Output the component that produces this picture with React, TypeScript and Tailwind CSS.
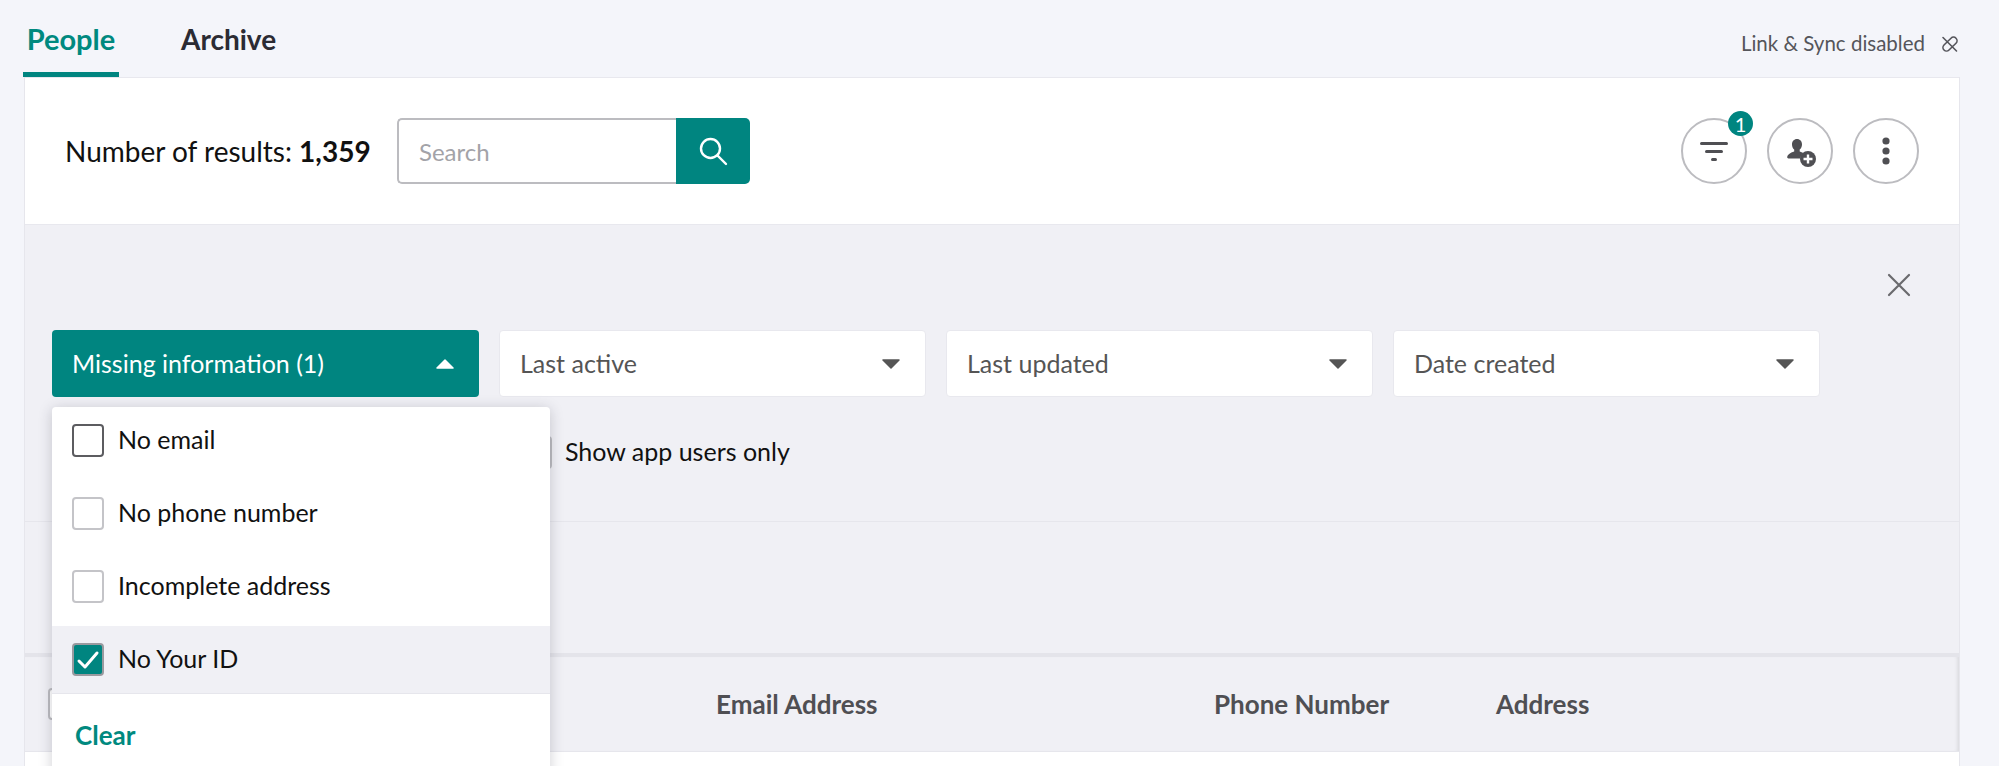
const teal = 'bg-[#008580]';

function Caret({ up, white }: { up?: boolean; white?: boolean }) {
  return (
    <svg width="20" height="10" viewBox="0 0 20 10" className={up ? 'rotate-180' : ''}>
      <path d="M2 1h16l-8 8z" fill={white ? '#fff' : '#555'} stroke={white ? '#fff' : '#555'} strokeWidth="1.5" strokeLinejoin="round" />
    </svg>
  );
}

function FilterDropdown({ label, active }: { label: string; active?: boolean }) {
  return (
    <div
      className={`w-[427px] h-[67px] rounded-[4px] flex items-center justify-between pl-[20px] pr-[24px] ${
        active ? `${teal} text-white` : 'bg-white border border-[#e8e8ee] text-[#555]'
      }`}
    >
      <span>{label}</span>
      <Caret up={active} white={active} />
    </div>
  );
}

function CheckRow({ label, checked, dark }: { label: string; checked?: boolean; dark?: boolean }) {
  return (
    <div className={`h-[67px] flex items-center gap-[14px] pl-[20px] ${checked ? 'bg-[#f0f0f5]' : ''}`}>
      {checked ? (
        <span className={`w-[32px] h-[33px] rounded-[4px] ${teal} border-2 border-[#9a9a9f] flex items-center justify-center`}>
          <svg width="24" height="20" viewBox="0 0 24 20" fill="none" stroke="#fff" strokeWidth="3" strokeLinecap="round" strokeLinejoin="round">
            <path d="M3 11l6 6L21 3" />
          </svg>
        </span>
      ) : (
        <span className={`w-[32px] h-[33px] rounded-[4px] bg-white border-2 ${dark ? 'border-[#5c5c60]' : 'border-[#c4c4c8]'}`} />
      )}
      <span className="text-[#111] -mt-[2px]">{label}</span>
    </div>
  );
}

function RoundButton({ children }: { children: React.ReactNode }) {
  return (
    <div className="relative w-[66px] h-[66px] rounded-full border-2 border-[#bcbcc0] bg-white flex items-center justify-center">
      {children}
    </div>
  );
}

export default function App() {
  return (
    <div
      className="relative w-[1999px] h-[766px] overflow-hidden bg-[#f4f5fa] text-[25px] leading-none pl-[24px]"
      style={{ fontFamily: 'Lato, "Noto Sans", sans-serif' }}
    >
      {/* tabs row */}
      <div className="h-[77px] w-[1936px] flex items-end justify-between">
        <div className="flex gap-[62px] -ml-[1px] font-bold">
          <div className="h-[77px] w-[96px] flex flex-col items-center justify-end text-[#00897f] text-[29px]">
            <span className="mb-[19px]">People</span>
            <span className={`h-[5px] w-full ${teal}`} />
          </div>
          <div className="h-[77px] flex flex-col justify-end text-[#2b2b33] text-[28px]">
            <span className="mb-[24px]">Archive</span>
          </div>
        </div>
        <div className="h-[77px] flex items-center gap-[16px] pt-[10px] text-[20.500px] text-[#55555b]">
          <span>Link &amp; Sync disabled</span>
          <svg width="18" height="18" viewBox="0 0 18 18" fill="none" stroke="#55555b" strokeWidth="1.6" strokeLinecap="round" strokeLinejoin="round" className="mr-[1px]">
            <path d="M2 2.500l13.500 13.500M10 3.200a3.400 3.400 0 015 5L8 15a3.400 3.400 0 01-5-5z" />
          </svg>
        </div>
      </div>

      <div className="w-[1936px] border-r border-l border-[#e6e6ec]">
        {/* results bar */}
        <div className="h-[148px] bg-white border-t border-b border-[#e8e8ee] flex items-center justify-between pl-[40px] pr-[40px]">
          <div className="flex items-center">
            <span className="w-[332px] text-[28px] text-[#111]">
              Number of results: <b>1,359</b>
            </span>
            <input
              placeholder="Search"
              className="w-[279px] h-[66px] pl-[20px] text-[24px] bg-white border-2 border-r-0 border-[#bcbcc0] rounded-l-[5px] outline-none placeholder:text-[#a3a3a8]"
            />
            <div className={`w-[74px] h-[66px] rounded-r-[5px] ${teal} flex items-center justify-center`}>
              <svg width="30" height="30" viewBox="0 0 30 30" fill="none" stroke="#fff" strokeWidth="2.400" strokeLinecap="round">
                <circle cx="12.500" cy="12.500" r="9.500" />
                <path d="M19.500 19.500L28 28" />
              </svg>
            </div>
          </div>
          <div className="flex gap-[20px]">
            <RoundButton>
              <svg width="30" height="22" viewBox="0 0 30 22" fill="#4f4f53">
                <rect x="1" y="2" width="28" height="3" rx="1.500" />
                <rect x="6" y="10" width="18" height="3" rx="1.500" />
                <rect x="12" y="18" width="6" height="3" rx="1.500" />
              </svg>
              <span className="absolute -top-[9px] left-[45px] w-[25px] h-[25px] rounded-full bg-[#008580] text-white text-[20px] flex items-center justify-center">
                1
              </span>
            </RoundButton>
            <RoundButton>
              <svg width="30" height="30" viewBox="0 0 30 30" className="ml-[4px] mt-[4px]">
                <path
                  fill="#4f4f53"
                  d="M10 1c3 0 5 2.400 5 5.400 0 2.200-1 4-2.300 5.200v1.800c1.400.5 2.600 1 3.500 1.500a9 9 0 00-2.700 5.600H1.500c-.8 0-1.300-.5-1.300-1.200 0-2.600 3-4.800 7-5.900v-1.800C5.900 10.400 5 8.600 5 6.400 5 3.400 7 1 10 1z"
                />
                <circle cx="21" cy="21" r="8" fill="#4f4f53" />
                <path d="M21 16.500v9M16.500 21h9" stroke="#fff" strokeWidth="2.400" />
              </svg>
            </RoundButton>
            <RoundButton>
              <svg width="10" height="30" viewBox="0 0 10 30" fill="#4f4f53">
                <circle cx="5" cy="5" r="3.600" />
                <circle cx="5" cy="15" r="3.600" />
                <circle cx="5" cy="25" r="3.600" />
              </svg>
            </RoundButton>
          </div>
        </div>

        {/* filter panel */}
        <div className="bg-[#f0f0f5]">
          <div className="h-[105px] pt-[48px] pr-[48px] flex justify-end">
            <svg width="24" height="24" viewBox="0 0 24 24" stroke="#6a6a6e" strokeWidth="2.200" strokeLinecap="round">
              <path d="M2 2l20 20M22 2L2 22" />
            </svg>
          </div>
          <div className="flex gap-[20px] pl-[27px]">
            <FilterDropdown label="Missing information (1)" active />
            <FilterDropdown label="Last active" />
            <FilterDropdown label="Last updated" />
            <FilterDropdown label="Date created" />
          </div>
          <div className="h-[125px] pt-[39px] pl-[495px] flex items-start gap-[13px] border-b border-[#e6e6ec] text-[#111]">
            <span className="w-[32px] h-[33px] rounded-[4px] bg-white border-2 border-[#bcbcc0]" />
            <span className="mt-[3px]">Show app users only</span>
          </div>
          <div className="h-[131px]" />
          <div className="h-[4px] bg-[#e4e4ea]" />
          <div className="h-[95px] flex items-center pl-[23px] font-bold text-[26px] text-[#4f4f53] border-b border-[#e6e6ec] shadow-[inset_-4px_0_4px_-3px_rgba(0,0,0,0.12)]">
            <span className="w-[32px] h-[32px] mr-[636px] rounded-[4px] bg-white border-2 border-[#bcbcc0]" />
            <span className="w-[498px]">Email Address</span>
            <span className="w-[282px]">Phone Number</span>
            <span>Address</span>
          </div>
          <div className="h-[14px] bg-white" />
        </div>
      </div>

      {/* open dropdown menu */}
      <div className="absolute left-[52px] top-[407px] w-[498px] h-[400px] bg-white rounded-[4px] shadow-[0_2px_14px_rgba(40,40,60,0.22)] flex flex-col">
        <CheckRow label="No email" dark />
        <div className="mt-[6px]"><CheckRow label="No phone number" /></div>
        <div className="mt-[6px]"><CheckRow label="Incomplete address" /></div>
        <div className="mt-[6px]"><CheckRow label="No Your ID" checked /></div>
        <div className="border-t border-[#e6e6ec] pl-[23px] pt-[28px] font-bold text-[26px] text-[#00897f]">Clear</div>
      </div>
    </div>
  );
}
